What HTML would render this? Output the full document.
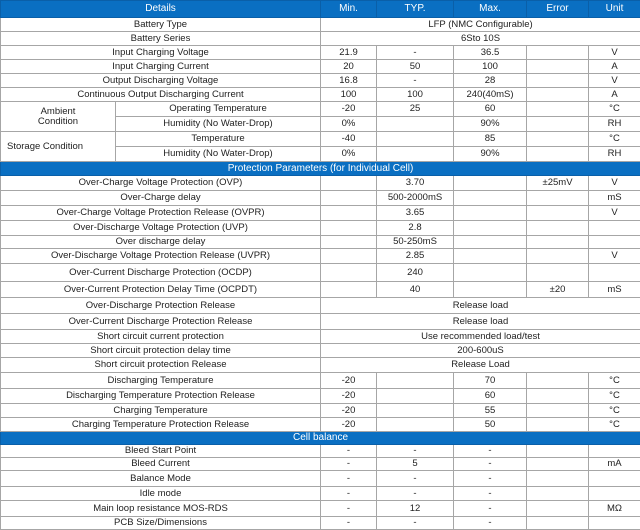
<!DOCTYPE html>
<html><head><meta charset="utf-8"><style>
html,body{margin:0;padding:0;background:#fff;}
table{border-collapse:collapse;table-layout:fixed;width:640px;font-family:"Liberation Sans",sans-serif;font-size:9.5px;color:#222;}
td{border:1px solid #a6a6a6;padding:0;text-align:center;line-height:10px;overflow:hidden;white-space:nowrap;}
tr.h td{background:#0a6fc2;color:#fff;border-color:#0a5fa8;font-size:10px;}
td.l{text-align:left;padding-left:6px;white-space:normal;}
</style></head><body>
<table>
<colgroup><col style="width:115px"><col style="width:205px"><col style="width:56px"><col style="width:77px"><col style="width:73px"><col style="width:62px"><col style="width:52px"></colgroup>
<tr class="h" style="height:17px"><td colspan="2">Details</td><td>Min.</td><td>TYP.</td><td>Max.</td><td>Error</td><td>Unit</td></tr>
<tr style="height:14px"><td colspan="2">Battery Type</td><td colspan="5">LFP (NMC Configurable)</td></tr>
<tr style="height:14px"><td colspan="2">Battery Series</td><td colspan="5">6Sto 10S</td></tr>
<tr style="height:14px"><td colspan="2">Input Charging Voltage</td><td>21.9</td><td>-</td><td>36.5</td><td></td><td>V</td></tr>
<tr style="height:14px"><td colspan="2">Input Charging Current</td><td>20</td><td>50</td><td>100</td><td></td><td>A</td></tr>
<tr style="height:14px"><td colspan="2">Output Discharging Voltage</td><td>16.8</td><td>-</td><td>28</td><td></td><td>V</td></tr>
<tr style="height:14px"><td colspan="2">Continuous Output Discharging Current</td><td>100</td><td>100</td><td>240(40mS)</td><td></td><td>A</td></tr>
<tr style="height:15px"><td rowspan="2">Ambient<br>Condition</td><td>Operating Temperature</td><td>-20</td><td>25</td><td>60</td><td></td><td>°C</td></tr>
<tr style="height:15px"><td>Humidity (No Water-Drop)</td><td>0%</td><td></td><td>90%</td><td></td><td>RH</td></tr>
<tr style="height:15px"><td rowspan="2" class="l">Storage Condition</td><td>Temperature</td><td>-40</td><td></td><td>85</td><td></td><td>°C</td></tr>
<tr style="height:15px"><td>Humidity (No Water-Drop)</td><td>0%</td><td></td><td>90%</td><td></td><td>RH</td></tr>
<tr class="h" style="height:14px"><td colspan="7">Protection Parameters (for Individual Cell)</td></tr>
<tr style="height:15px"><td colspan="2">Over-Charge Voltage Protection (OVP)</td><td></td><td>3.70</td><td></td><td>±25mV</td><td>V</td></tr>
<tr style="height:15px"><td colspan="2">Over-Charge delay</td><td></td><td>500-2000mS</td><td></td><td></td><td>mS</td></tr>
<tr style="height:15px"><td colspan="2">Over-Charge Voltage Protection Release (OVPR)</td><td></td><td>3.65</td><td></td><td></td><td>V</td></tr>
<tr style="height:15px"><td colspan="2">Over-Discharge Voltage Protection (UVP)</td><td></td><td>2.8</td><td></td><td></td><td></td></tr>
<tr style="height:13px"><td colspan="2">Over discharge delay</td><td></td><td>50-250mS</td><td></td><td></td><td></td></tr>
<tr style="height:15px"><td colspan="2">Over-Discharge Voltage Protection Release (UVPR)</td><td></td><td>2.85</td><td></td><td></td><td>V</td></tr>
<tr style="height:18px"><td colspan="2">Over-Current Discharge Protection (OCDP)</td><td></td><td>240</td><td></td><td></td><td></td></tr>
<tr style="height:16px"><td colspan="2">Over-Current Protection Delay Time (OCPDT)</td><td></td><td>40</td><td></td><td>±20</td><td>mS</td></tr>
<tr style="height:16px"><td colspan="2">Over-Discharge Protection Release</td><td colspan="5">Release load</td></tr>
<tr style="height:16px"><td colspan="2">Over-Current Discharge Protection Release</td><td colspan="5">Release load</td></tr>
<tr style="height:14px"><td colspan="2">Short circuit current protection</td><td colspan="5">Use recommended load/test</td></tr>
<tr style="height:14px"><td colspan="2">Short circuit protection delay time</td><td colspan="5">200-600uS</td></tr>
<tr style="height:15px"><td colspan="2">Short circuit protection Release</td><td colspan="5">Release Load</td></tr>
<tr style="height:16px"><td colspan="2">Discharging Temperature</td><td>-20</td><td></td><td>70</td><td></td><td>°C</td></tr>
<tr style="height:15px"><td colspan="2">Discharging Temperature Protection Release</td><td>-20</td><td></td><td>60</td><td></td><td>°C</td></tr>
<tr style="height:14px"><td colspan="2">Charging Temperature</td><td>-20</td><td></td><td>55</td><td></td><td>°C</td></tr>
<tr style="height:14px"><td colspan="2">Charging Temperature Protection Release</td><td>-20</td><td></td><td>50</td><td></td><td>°C</td></tr>
<tr class="h" style="height:13px"><td colspan="7">Cell balance</td></tr>
<tr style="height:13px"><td colspan="2">Bleed Start Point</td><td>-</td><td>-</td><td>-</td><td></td><td></td></tr>
<tr style="height:13px"><td colspan="2">Bleed Current</td><td>-</td><td>5</td><td>-</td><td></td><td>mA</td></tr>
<tr style="height:16px"><td colspan="2">Balance Mode</td><td>-</td><td>-</td><td>-</td><td></td><td></td></tr>
<tr style="height:14px"><td colspan="2">Idle mode</td><td>-</td><td>-</td><td>-</td><td></td><td></td></tr>
<tr style="height:16px"><td colspan="2">Main loop resistance MOS-RDS</td><td>-</td><td>12</td><td>-</td><td></td><td>MΩ</td></tr>
<tr style="height:13px"><td colspan="2">PCB Size/Dimensions</td><td>-</td><td>-</td><td>-</td><td></td><td></td></tr>
</table>
</body></html>
